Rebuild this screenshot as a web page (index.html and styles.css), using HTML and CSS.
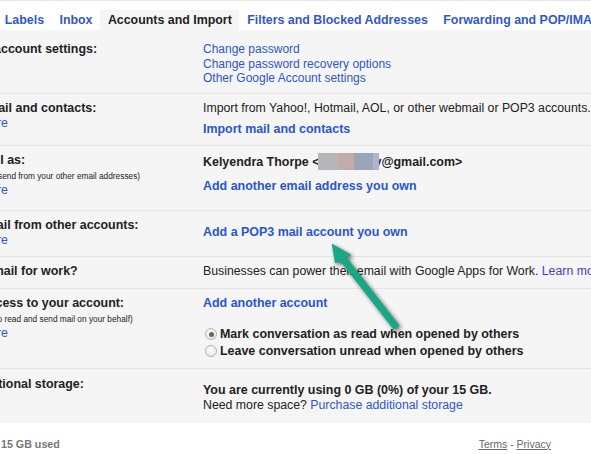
FILE: index.html
```html
<!DOCTYPE html>
<html>
<head>
<meta charset="utf-8">
<title>Settings - Accounts and Import</title>
<link rel="stylesheet" href="styles.css">
</head>
<body>
<nav class="tabs">
  <a class="tab">Labels</a>
  <a class="tab">Inbox</a>
  <a class="tab tab-active">Accounts and Import</a>
  <a class="tab">Filters and Blocked Addresses</a>
  <a class="tab">Forwarding and POP/IMAP</a>
</nav>
<main class="settings">
  <section class="row row-first">
    <div class="col"><span class="title">Change account settings:</span></div>
    <div class="col links">
      <a>Change password</a>
      <a>Change password recovery options</a>
      <a>Other Google Account settings</a>
    </div>
  </section>
  <section class="row">
    <div class="col"><span class="title">Import mail and contacts:</span><a>Learn more</a></div>
    <div class="col">
      <span>Import from Yahoo!, Hotmail, AOL, or other webmail or POP3 accounts.</span>
      <a class="strong gap6">Import mail and contacts</a>
    </div>
  </section>
  <section class="row row-send">
    <div class="col">
      <span class="title">Send mail as:</span>
      <span class="note">(Use Gmail to send from your other email addresses)</span>
      <a>Learn more</a>
    </div>
    <div class="col">
      <span class="title">Kelyendra Thorpe &lt;<span class="redact"><i class="r1"></i><i class="r2"></i><i class="r3"></i><i class="r4"></i></span>y@gmail.com&gt;</span>
      <a class="strong gap9">Add another email address you own</a>
    </div>
  </section>
  <section class="row">
    <div class="col"><span class="title">Check mail from other accounts:</span><a>Learn more</a></div>
    <div class="col"><a class="strong gap7">Add a POP3 mail account you own</a></div>
  </section>
  <section class="row row-work">
    <div class="col"><span class="title">Using Gmail for work?</span></div>
    <div class="col"><span>Businesses can power their email with Google Apps for Work. <a class="visited">Learn more</a></span></div>
  </section>
  <section class="row">
    <div class="col">
      <span class="title">Grant access to your account:</span>
      <span class="note">(Allow others to read and send mail on your behalf)</span>
      <a>Learn more</a>
    </div>
    <div class="col">
      <a class="strong">Add another account</a>
      <label class="radio radio-first"><input type="radio" name="mark" checked> Mark conversation as read when opened by others</label>
      <label class="radio"><input type="radio" name="mark"> Leave conversation unread when opened by others</label>
    </div>
  </section>
  <section class="row row-storage">
    <div class="col"><span class="title">Add additional storage:</span></div>
    <div class="col gap6">
      <span class="title">You are currently using 0 GB (0%) of your 15 GB.</span>
      <span>Need more space? <a>Purchase additional storage</a></span>
    </div>
  </section>
</main>
<footer class="footer">
  <span class="usage">0 GB (0%) of 15 GB used</span>
  <span class="legal"><a>Terms</a> - <a>Privacy</a></span>
</footer>
<svg class="arrow" width="591" height="454" viewBox="0 0 591 454">
  <polygon points="331.7,243.5 351.7,255 346.2,257 399.2,325.3 393.8,329.7 340.6,261.4 335,263.3" fill="#19a886"/>
</svg>
</body>
</html>
```
FILE: styles.css
```css
html, body {
  margin: 0;
  padding: 0;
}
body {
  width: 591px;
  height: 454px;
  overflow: hidden;
  position: relative;
  background: #fff;
  font-family: "Liberation Sans", Arial, sans-serif;
  font-size: 12.3px;
  color: #222;
  white-space: nowrap;
}
a {
  color: #2f57cb;
  text-decoration: none;
  cursor: pointer;
}
.tabs {
  display: flex;
  border-top: 1px solid #e6e6e6;
  padding-top: 9px;
  margin-left: -3px;
}
.tab {
  padding: 0 7.6px 0 7.8px;
  line-height: 20px;
  font-size: 12.4px;
  font-weight: bold;
  color: #3157cc;
}
.tab-active {
  background: #f5f5f5;
  color: #222;
}
.settings {
  background: #f5f5f5;
}
.row {
  display: grid;
  grid-template-columns: 258px 700px;
  margin-left: -55px;
  padding: 7px 0 8px;
  border-top: 1px solid #e4e4e4;
  line-height: 15px;
}
.row-first {
  border-top: none;
  padding: 12px 0 7.5px;
}
.row-send {
  padding-bottom: 12px;
}
.row-work {
  padding-bottom: 9px;
}
.row-storage {
  padding: 8px 0 10px;
}
.col {
  display: flex;
  flex-direction: column;
  align-items: flex-start;
}
.links {
  line-height: 14.5px;
  font-size: 12px;
}
.title {
  font-weight: bold;
  font-size: 12.45px;
}
.strong {
  font-weight: bold;
  font-size: 12.45px;
  color: #2a55d0;
}
.gap6 {
  margin-top: 6px;
}
.gap7 {
  margin-top: 7px;
}
.gap9 {
  margin-top: 9px;
}
.note {
  font-size: 8.3px;
  line-height: 14px;
  margin-top: 1px;
}
.visited {
  color: #4a3cc4;
}
.redact {
  display: inline-flex;
  vertical-align: -4px;
  height: 17px;
  margin: 0 -5px 0 -1px;
  position: relative;
}
.redact i {
  display: block;
  height: 17px;
}
.r1 { width: 20px; background: #b6b6ba; }
.r2 { width: 16px; background: #c3aca8; }
.r3 { width: 19px; background: #9ba4b9; }
.r4 { width: 6px; background: #aeb4c9; }
.radio {
  display: flex;
  align-items: center;
  line-height: 17px;
  font-weight: bold;
  font-size: 12.45px;
}
.radio-first {
  margin-top: 14.5px;
}
.radio input {
  appearance: none;
  -webkit-appearance: none;
  width: 12px;
  height: 12px;
  margin: 0 3px 0 2px;
  border: 1px solid #b4b4b4;
  border-radius: 50%;
  background: radial-gradient(circle at 50% 35%, #fdfdfd, #e2e2e2);
  box-sizing: border-box;
  display: grid;
  place-items: center;
}
.radio input:checked::after {
  content: "";
  width: 5px;
  height: 5px;
  border-radius: 50%;
  background: #666;
}
.footer {
  display: flex;
  justify-content: space-between;
  margin-left: -65.5px;
  padding: 14px 40px 0 0;
  line-height: 14px;
  font-size: 10.5px;
}
.usage {
  font-weight: bold;
  font-size: 10.7px;
  color: #777;
}
.legal {
  color: #666;
}
.legal a {
  color: #666;
  text-decoration: underline;
}
.arrow {
  position: absolute;
  left: 0;
  top: 0;
  pointer-events: none;
  filter: drop-shadow(2px 2px 2px rgba(0, 0, 0, 0.6));
}
```
